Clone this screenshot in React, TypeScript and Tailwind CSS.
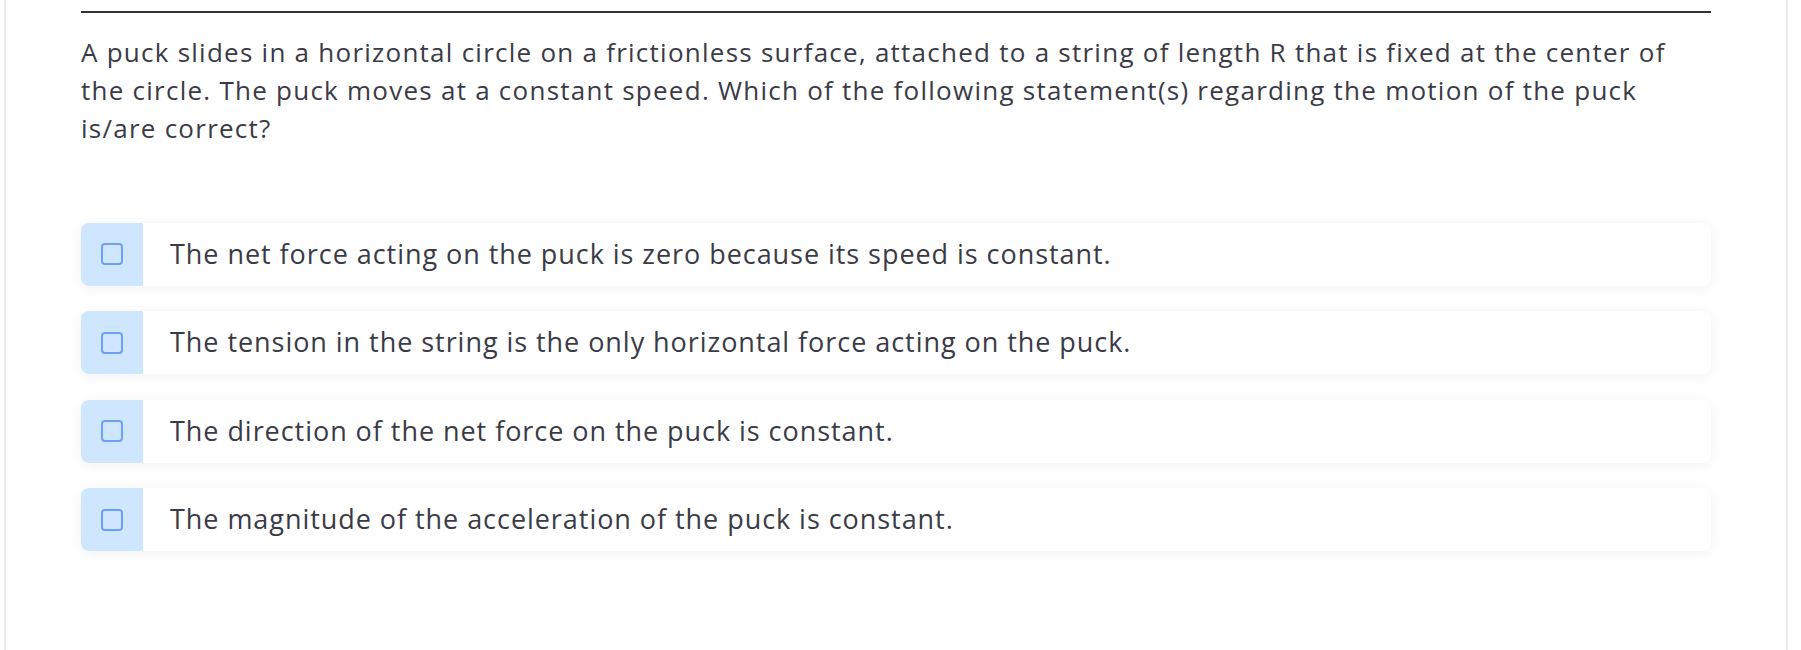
import React from 'react';

const options = [
  'The net force acting on the puck is zero because its speed is constant.',
  'The tension in the string is the only horizontal force acting on the puck.',
  'The direction of the net force on the puck is constant.',
  'The magnitude of the acceleration of the puck is constant.',
];

function CheckIcon() {
  return (
    <svg width="22" height="22" viewBox="0 0 22 22" fill="none">
      <rect x="1" y="1" width="20" height="20" rx="3" stroke="#6e9ff2" strokeWidth="2" />
    </svg>
  );
}

export default function App() {
  return (
    <div className="h-[650px] w-full overflow-hidden bg-white pl-1 font-['Open_Sans',sans-serif] text-[#3a3b47]">
      <div className="flex h-full w-[1784px] flex-col border-l-2 border-r-2 border-l-[#ebebeb] border-r-[#ecebf5] px-[75px]">
        <div className="mt-[11px] h-[1.5px] bg-[#333]" />

        <p className="mt-[20px] text-[26px] leading-[38.4px] tracking-[1.25px]">
          A puck slides in a horizontal circle on a frictionless surface, attached to a string of length R that is
          fixed at the center of the circle. The puck moves at a constant speed. Which of the following statement(s)
          regarding the motion of the puck is/are correct?
        </p>

        <div className="mt-[75px] flex flex-col gap-[25.5px]">
          {options.map((text) => (
            <div
              key={text}
              className="flex h-[63px] items-stretch overflow-hidden rounded-lg bg-white shadow-[0_2px_14px_rgba(0,0,0,0.06)]"
            >
              <div className="flex w-[62px] shrink-0 items-center justify-center bg-[#cfe6ff]">
                <CheckIcon />
              </div>
              <div className="flex items-center pl-[27px] text-[27px] tracking-[0.95px]">{text}</div>
            </div>
          ))}
        </div>
      </div>
    </div>
  );
}
